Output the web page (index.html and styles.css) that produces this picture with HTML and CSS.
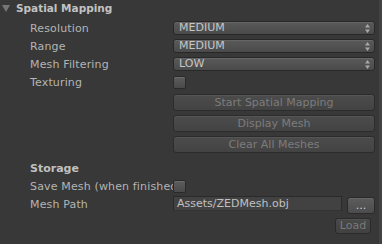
FILE: index.html
```html
<!DOCTYPE html>
<html>
<head>
<meta charset="utf-8">
<link rel="stylesheet" href="styles.css">
</head>
<body>
<div class="inspector">
  <div class="header">
    <span class="fold"></span>
    <span class="title">Spatial Mapping</span>
  </div>
  <div class="row">
    <span class="label">Resolution</span>
    <div class="popup"><span>MEDIUM</span><svg class="arrows" width="5" height="9" viewBox="0 0 5 9"><path d="M2.5 0 L5 3.5 L0 3.5 Z M2.5 9 L5 5.5 L0 5.5 Z" fill="#a8a8a8"/></svg></div>
  </div>
  <div class="row">
    <span class="label">Range</span>
    <div class="popup"><span>MEDIUM</span><svg class="arrows" width="5" height="9" viewBox="0 0 5 9"><path d="M2.5 0 L5 3.5 L0 3.5 Z M2.5 9 L5 5.5 L0 5.5 Z" fill="#a8a8a8"/></svg></div>
  </div>
  <div class="row">
    <span class="label">Mesh Filtering</span>
    <div class="popup"><span>LOW</span><svg class="arrows" width="5" height="9" viewBox="0 0 5 9"><path d="M2.5 0 L5 3.5 L0 3.5 Z M2.5 9 L5 5.5 L0 5.5 Z" fill="#a8a8a8"/></svg></div>
  </div>
  <div class="row">
    <span class="label">Texturing</span>
    <span class="check"></span>
  </div>
  <div class="buttons">
    <div class="btn disabled">Start Spatial Mapping</div>
    <div class="btn disabled">Display Mesh</div>
    <div class="btn disabled">Clear All Meshes</div>
  </div>
  <div class="row section">
    <span class="label bold">Storage</span>
  </div>
  <div class="row">
    <span class="label clip">Save Mesh (when finished)</span>
    <span class="check"></span>
  </div>
  <div class="row path">
    <span class="label">Mesh Path</span>
    <div class="field">Assets/ZEDMesh.obj</div>
    <div class="small-btn">...</div>
  </div>
  <div class="load-row">
    <div class="small-btn disabled load">Load</div>
  </div>
</div>
</body>
</html>
```
FILE: styles.css
```css
html, body {
  margin: 0;
  padding: 0;
  background: #383838;
}
body {
  width: 382px;
  height: 244px;
  overflow: hidden;
  font-family: "DejaVu Sans", sans-serif;
  font-size: 11px;
  color: #b4b4b4;
}
.inspector {
  width: 379px;
  height: 244px;
  border-right: 3px solid #424242;
  box-sizing: content-box;
  display: flex;
  flex-direction: column;
}
.header {
  height: 19px;
  display: flex;
  align-items: center;
}
.fold {
  width: 0;
  height: 0;
  margin-left: 2px;
  margin-right: 6px;
  border-left: 4px solid transparent;
  border-right: 4px solid transparent;
  border-top: 7px solid #767676;
  margin-top: -2px;
}
.title {
  font-weight: bold;
  font-size: 10.5px;
  color: #c2c2c2;
  margin-top: -3px;
}
.row {
  height: 18px;
  display: flex;
  align-items: center;
}
.label {
  width: 173px;
  padding-left: 30px;
  box-sizing: border-box;
  flex: none;
  white-space: nowrap;
  overflow: hidden;
  letter-spacing: 0.15px;
}
.bold {
  font-weight: bold;
  color: #c0c0c0;
  letter-spacing: 0;
}
.popup {
  width: 202px;
  height: 14px;
  box-sizing: border-box;
  border: 1px solid #282828;
  border-radius: 3px;
  background: linear-gradient(#5a5a5a, #4a4a4a);
  box-shadow: inset 0 1px 0 #666;
  display: flex;
  align-items: center;
  justify-content: space-between;
  padding: 0 4px 0 5px;
  color: #c6c6c6;
  font-size: 11px;
  line-height: 12px;
}
.arrows {
  display: block;
}
.check {
  width: 13px;
  height: 13px;
  box-sizing: border-box;
  border: 1px solid #2a2a2a;
  border-radius: 2px;
  background: linear-gradient(#5c5c5c, #4a4a4a);
  box-shadow: inset 0 1px 0 #6a6a6a;
}
.buttons {
  margin-top: 3px;
  margin-left: 173px;
  width: 202px;
  display: flex;
  flex-direction: column;
  gap: 4px;
}
.btn {
  height: 17px;
  box-sizing: border-box;
  border: 1px solid #2c2c2c;
  border-radius: 3px;
  background: linear-gradient(#4c4c4c, #434343);
  box-shadow: inset 0 1px 0 #555;
  display: flex;
  align-items: center;
  justify-content: center;
}
.btn.disabled {
  color: #7c7c7c;
}
.section {
  margin-top: 6px;
}
.path .field {
  width: 169px;
  height: 15px;
  box-sizing: border-box;
  border: 1px solid #2a2a2a;
  border-bottom-color: #333;
  background: #424242;
  color: #c0c0c0;
  padding-left: 3px;
  line-height: 13px;
  white-space: nowrap;
  overflow: hidden;
  margin-top: -1px;
}
.small-btn {
  width: 28px;
  height: 17px;
  margin-left: 5px;
  margin-top: 3px;
  box-sizing: border-box;
  border: 1px solid #2a2a2a;
  border-radius: 3px;
  background: linear-gradient(#5c5c5c, #4c4c4c);
  box-shadow: inset 0 1px 0 #686868;
  color: #d0d0d0;
  display: flex;
  align-items: center;
  justify-content: center;
  line-height: 12px;
}
.small-btn.disabled {
  color: #7a7a7a;
  background: linear-gradient(#494949, #414141);
  box-shadow: inset 0 1px 0 #525252;
}
.load-row {
  display: flex;
  justify-content: flex-end;
  padding-right: 8px;
}
.load {
  width: 36px;
  height: 16px;
  margin-top: 5px;
  margin-left: 0;
}
```
